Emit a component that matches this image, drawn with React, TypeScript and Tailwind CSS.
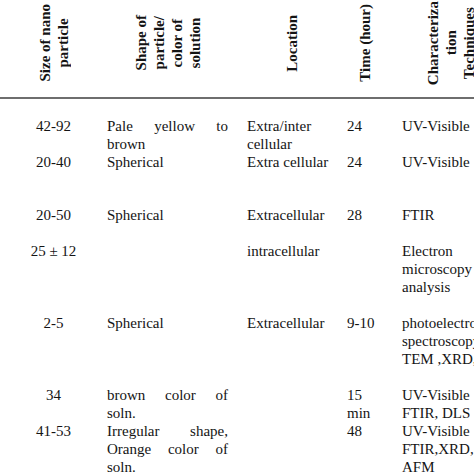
const headers: string[][] = [
  ["Size of nano", "particle"],
  ["Shape of", "particle/", "color of", "solution"],
  ["Location"],
  ["Time (hour)"],
  ["Characteriza", "tion", "Techniques"],
];

// each line: [text, justified?]
type Line = [string, boolean?];

const rows: { h: string; cells: Line[][] }[] = [
  {
    h: "h-[36px]",
    cells: [
      [["42-92"]],
      [["Pale yellow to", true], ["brown"]],
      [["Extra/inter"], ["cellular"]],
      [["24"]],
      [["UV-Visible"]],
    ],
  },
  {
    h: "h-[53px]",
    cells: [[["20-40"]], [["Spherical"]], [["Extra cellular"]], [["24"]], [["UV-Visible"]]],
  },
  {
    h: "h-[36px]",
    cells: [[["20-50"]], [["Spherical"]], [["Extracellular"]], [["28"]], [["FTIR"]]],
  },
  {
    h: "h-[72px]",
    cells: [
      [["25 ± 12"]],
      [],
      [["intracellular"]],
      [],
      [["Electron"], ["microscopy"], ["analysis"]],
    ],
  },
  {
    h: "h-[72px]",
    cells: [
      [["2-5"]],
      [["Spherical"]],
      [["Extracellular"]],
      [["9-10"]],
      [["photoelectron"], ["spectroscopy,"], ["TEM ,XRD,"]],
    ],
  },
  {
    h: "h-[36px]",
    cells: [
      [["34"]],
      [["brown color of", true], ["soln."]],
      [],
      [["15"], ["min"]],
      [["UV-Visible"], ["FTIR, DLS"]],
    ],
  },
  {
    h: "h-[60px]",
    cells: [
      [["41-53"]],
      [["Irregular shape,", true], ["Orange color of", true], ["soln."]],
      [],
      [["48"]],
      [["UV-Visible"], ["FTIR,XRD,"], ["AFM"]],
    ],
  },
];

const cols = "grid grid-cols-[107px_140px_100px_55px_140px]";
const pads = ["text-center", "pr-[19px]", "pr-[10px]", "pr-[20px]", ""];

export default function App() {
  return (
    <div className="w-[474px] h-[474px] overflow-hidden bg-white text-[#141414] font-['Liberation_Serif',serif] text-[15px] leading-[18px]">
      <div className="w-[560px]">
        <div className={`${cols} h-[86px] mb-[11px]`}>
          {headers.map((lines, i) => (
            <div key={i} className={`flex items-center justify-center ${i === 0 ? "" : pads[i]} ${i === 4 ? "w-[98px]" : ""}`}>
              <div className="[writing-mode:vertical-rl] rotate-180 text-center font-bold whitespace-nowrap">
                {lines.map((l, j) => (
                  <div key={j}>{l}</div>
                ))}
              </div>
            </div>
          ))}
        </div>
        <div className="h-[2px] bg-[#6e6e6e]" />
        <div className="pt-[18px]">
          {rows.map((r, i) => (
            <div key={i} className={`${cols} ${r.h}`}>
              {r.cells.map((lines, j) => (
                <div key={j} className={pads[j]}>
                  {lines.map(([t, just], k) => (
                    <div
                      key={k}
                      className={just ? "text-justify [text-align-last:justify]" : "whitespace-nowrap"}
                    >
                      {t}
                    </div>
                  ))}
                </div>
              ))}
            </div>
          ))}
        </div>
      </div>
    </div>
  );
}
